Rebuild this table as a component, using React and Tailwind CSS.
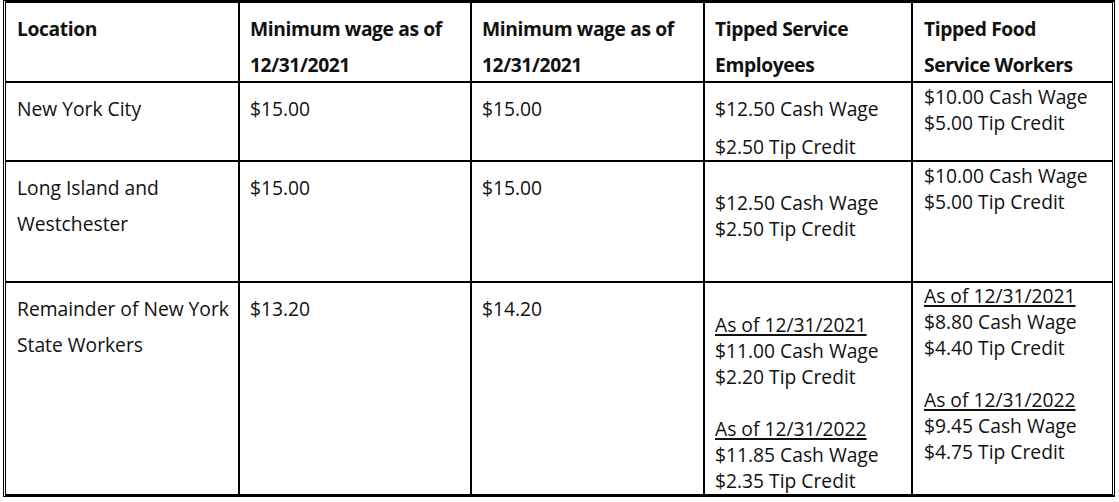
import React from "react";

const U = ({ children }) => (
  <span className="underline underline-offset-[2px] [text-decoration-thickness:1.5px]">{children}</span>
);

const Line = ({ h, children }) => {
  const cls = {
    36: "h-[36px] leading-[36px]",
    38: "h-[38px] leading-[38px]",
    26: "h-[26px] leading-[26px]",
  }[h];
  return <div className={`${cls} whitespace-nowrap`}>{children}</div>;
};

export default function App() {
  return (
    <div className="bg-white w-[1119px] h-[502px] font-['Open_Sans',sans-serif] text-[19.25px] text-[#111]">
      <div className="ml-[3px] w-[1112px] grid grid-cols-[232px_230px_231px_206px_199px] grid-rows-[78px_77px_119px_211px] gap-[2px] bg-black bg-clip-padding border-[3px] border-black [border-left-style:double] [border-right-style:double]">
        {/* Header */}
        <div className="bg-white pl-[11px] pt-[8px] font-bold tracking-[-0.4px]">
          <Line h={36}>Location</Line>
        </div>
        <div className="bg-white pl-[10px] pt-[8px] font-bold tracking-[-0.4px]">
          <Line h={36}>Minimum wage as of</Line>
          <Line h={36}>12/31/2021</Line>
        </div>
        <div className="bg-white pl-[10px] pt-[8px] font-bold tracking-[-0.4px]">
          <Line h={36}>Minimum wage as of</Line>
          <Line h={36}>12/31/2021</Line>
        </div>
        <div className="bg-white pl-[10px] pt-[8px] font-bold tracking-[-0.4px]">
          <Line h={36}>Tipped Service</Line>
          <Line h={36}>Employees</Line>
        </div>
        <div className="bg-white pl-[11px] pt-[8px] font-bold tracking-[-0.4px]">
          <Line h={36}>Tipped Food</Line>
          <Line h={36}>Service Workers</Line>
        </div>

        {/* Row 1 */}
        <div className="bg-white pl-[11px] pt-[8px]">
          <Line h={36}>New York City</Line>
        </div>
        <div className="bg-white pl-[10px] pt-[8px]">
          <Line h={36}>$15.00</Line>
        </div>
        <div className="bg-white pl-[10px] pt-[8px]">
          <Line h={36}>$15.00</Line>
        </div>
        <div className="bg-white pl-[10px] pt-[7px]">
          <Line h={38}>$12.50 Cash Wage</Line>
          <Line h={38}>$2.50 Tip Credit</Line>
        </div>
        <div className="bg-white pl-[11px] pt-[1px]">
          <Line h={26}>$10.00 Cash Wage</Line>
          <Line h={26}>$5.00 Tip Credit</Line>
        </div>

        {/* Row 2 */}
        <div className="bg-white pl-[11px] pt-[8px]">
          <Line h={36}>Long Island and</Line>
          <Line h={36}>Westchester</Line>
        </div>
        <div className="bg-white pl-[10px] pt-[8px]">
          <Line h={36}>$15.00</Line>
        </div>
        <div className="bg-white pl-[10px] pt-[8px]">
          <Line h={36}>$15.00</Line>
        </div>
        <div className="bg-white pl-[10px] pt-[28px]">
          <Line h={26}>$12.50 Cash Wage</Line>
          <Line h={26}>$2.50 Tip Credit</Line>
        </div>
        <div className="bg-white pl-[11px] pt-[1px]">
          <Line h={26}>$10.00 Cash Wage</Line>
          <Line h={26}>$5.00 Tip Credit</Line>
        </div>

        {/* Row 3 */}
        <div className="bg-white pl-[11px] pt-[8px]">
          <Line h={36}>Remainder of New York</Line>
          <Line h={36}>State Workers</Line>
        </div>
        <div className="bg-white pl-[10px] pt-[8px]">
          <Line h={36}>$13.20</Line>
        </div>
        <div className="bg-white pl-[10px] pt-[8px]">
          <Line h={36}>$14.20</Line>
        </div>
        <div className="bg-white pl-[10px] pt-[29px]">
          <Line h={26}><U>As of 12/31/2021</U></Line>
          <Line h={26}>$11.00 Cash Wage</Line>
          <Line h={26}>$2.20 Tip Credit</Line>
          <Line h={26}>{"\u00a0"}</Line>
          <Line h={26}><U>As of 12/31/2022</U></Line>
          <Line h={26}>$11.85 Cash Wage</Line>
          <Line h={26}>$2.35 Tip Credit</Line>
        </div>
        <div className="bg-white pl-[11px] pt-0">
          <Line h={26}><U>As of 12/31/2021</U></Line>
          <Line h={26}>$8.80 Cash Wage</Line>
          <Line h={26}>$4.40 Tip Credit</Line>
          <Line h={26}>{"\u00a0"}</Line>
          <Line h={26}><U>As of 12/31/2022</U></Line>
          <Line h={26}>$9.45 Cash Wage</Line>
          <Line h={26}>$4.75 Tip Credit</Line>
        </div>
      </div>
    </div>
  );
}
